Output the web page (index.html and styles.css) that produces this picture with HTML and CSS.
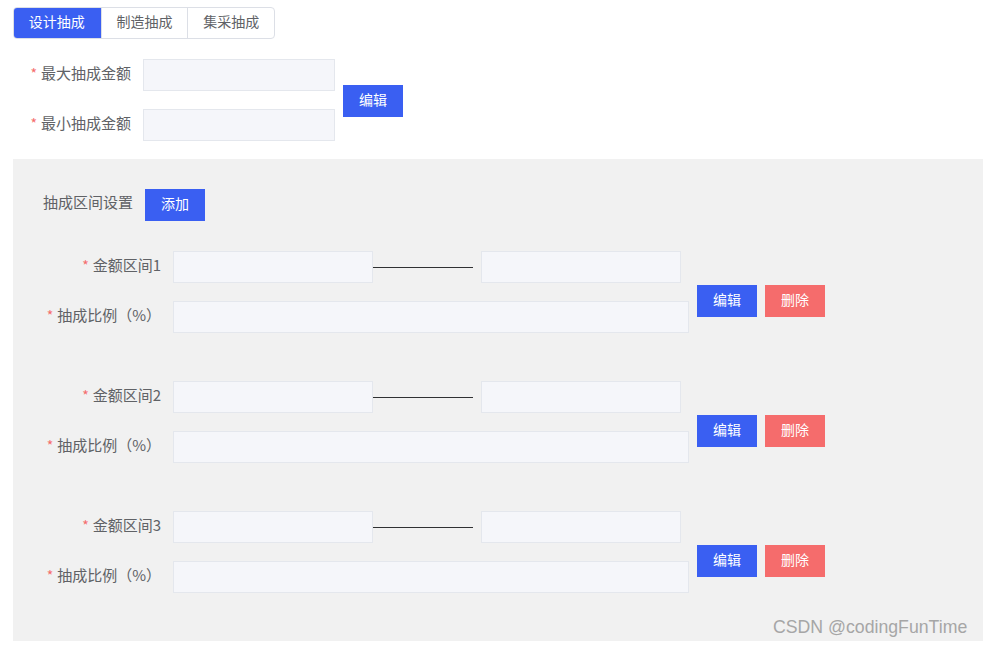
FILE: index.html
```html
<!DOCTYPE html>
<html lang="zh-CN">
<head>
<meta charset="utf-8">
<title>抽成设置</title>
<link rel="stylesheet" href="styles.css">
</head>
<body>
<div class="page">
  <div class="tabs">
    <div class="tab active">设计抽成</div>
    <div class="tab">制造抽成</div>
    <div class="tab">集采抽成</div>
  </div>

  <div class="top-form">
    <div class="rows">
      <div class="row"><label class="label req">最大抽成金额</label><div class="input w192"></div></div>
      <div class="row"><label class="label req">最小抽成金额</label><div class="input w192"></div></div>
    </div>
    <button class="btn primary">编辑</button>
  </div>

  <div class="panel">
    <div class="panel-head">
      <span class="head-title">抽成区间设置</span>
      <button class="btn primary">添加</button>
    </div>

    <div class="group">
      <div class="grows">
        <div class="grow"><label class="glabel req">金额区间1</label><div class="input w200"></div><span class="dash"></span><div class="input w200"></div></div>
        <div class="grow"><label class="glabel req">抽成比例（%）</label><div class="input w516"></div></div>
      </div>
      <div class="gbtns"><button class="btn primary">编辑</button><button class="btn danger">删除</button></div>
    </div>

    <div class="group">
      <div class="grows">
        <div class="grow"><label class="glabel req">金额区间2</label><div class="input w200"></div><span class="dash"></span><div class="input w200"></div></div>
        <div class="grow"><label class="glabel req">抽成比例（%）</label><div class="input w516"></div></div>
      </div>
      <div class="gbtns"><button class="btn primary">编辑</button><button class="btn danger">删除</button></div>
    </div>

    <div class="group">
      <div class="grows">
        <div class="grow"><label class="glabel req">金额区间3</label><div class="input w200"></div><span class="dash"></span><div class="input w200"></div></div>
        <div class="grow"><label class="glabel req">抽成比例（%）</label><div class="input w516"></div></div>
      </div>
      <div class="gbtns"><button class="btn primary">编辑</button><button class="btn danger">删除</button></div>
    </div>
  </div>
  <div class="watermark">CSDN @codingFunTime</div>
</div>
</body>
</html>
```

FILE: styles.css
```css
* { box-sizing: border-box; }
html, body { margin: 0; padding: 0; background: #fff; }
body {
  font-family: "Microsoft YaHei", "Noto Sans CJK SC", "Liberation Sans", sans-serif;
  color: #606266;
  width: 983px;
  height: 647px;
  overflow: hidden;
}
.page {
  position: relative;
  padding: 7px 0 0 13px;
}
.tabs {
  display: flex;
  width: 262px;
  height: 32px;
  border: 1px solid #dcdfe6;
  border-radius: 4px;
  overflow: hidden;
}
.tab {
  width: 87px;
  display: flex;
  align-items: center;
  justify-content: center;
  font-size: 14px;
  line-height: 20px;
  padding-bottom: 4px;
  color: #606266;
  border-left: 1px solid #dcdfe6;
}
.tab:first-child { border-left: none; margin: -1px 0 -1px -1px; width: 88px; }
.tab.active { background: #3a5ff2; color: #fff; }

.top-form {
  display: flex;
  align-items: center;
  margin-top: 20px;
}
.rows { display: flex; flex-direction: column; gap: 18px; }
.row { display: flex; align-items: center; }
.label {
  width: 130px;
  padding-right: 12px;
  padding-bottom: 5px;
  text-align: right;
  font-size: 15px;
  line-height: 20px;
  color: #606266;
}
.req::before {
  content: "*";
  color: #f56c6c;
  margin-right: 4px;
  font-size: 14px;
}
.input {
  height: 32px;
  background: #f5f6fa;
  border: 1px solid #e4e7ed;
}
.w192 { width: 192px; }
.w200 { width: 200px; }
.w516 { width: 516px; }
.btn {
  width: 60px;
  height: 32px;
  border: none;
  padding: 0 0 4px 0;
  font-family: inherit;
  font-size: 14px;
  line-height: 20px;
  color: #fff;
  cursor: pointer;
}
.btn.primary { background: #3a5ff2; }
.btn.danger { background: #f56c6c; }
.top-form > .btn { margin-left: 8px; margin-top: 1px; }

.panel {
  margin-top: 18px;
  background: #f1f1f1;
  height: 482px;
  padding: 30px;
  display: flex;
  flex-direction: column;
  gap: 30px;
}
.panel-head { display: flex; align-items: center; gap: 12px; }
.head-title { font-size: 15px; line-height: 20px; padding-bottom: 7px; color: #606266; }
.group { display: flex; align-items: center; margin-left: -30px; }
.grows { display: flex; flex-direction: column; }
.grow { display: flex; align-items: center; margin-bottom: 18px; }
.glabel {
  width: 160px;
  padding-right: 12px;
  padding-bottom: 5px;
  text-align: right;
  font-size: 15px;
  line-height: 20px;
  color: #606266;
  white-space: nowrap;
}
.dash {
  width: 100px;
  height: 1px;
  background: #303133;
  margin-right: 8px;
}
.gbtns { display: flex; gap: 8px; margin-left: 8px; }
.watermark {
  position: absolute;
  left: 773px;
  top: 617px;
  font-family: "Liberation Sans", Arial, sans-serif;
  font-size: 17.7px;
  color: #a6a6a6;
  white-space: nowrap;
}
```
